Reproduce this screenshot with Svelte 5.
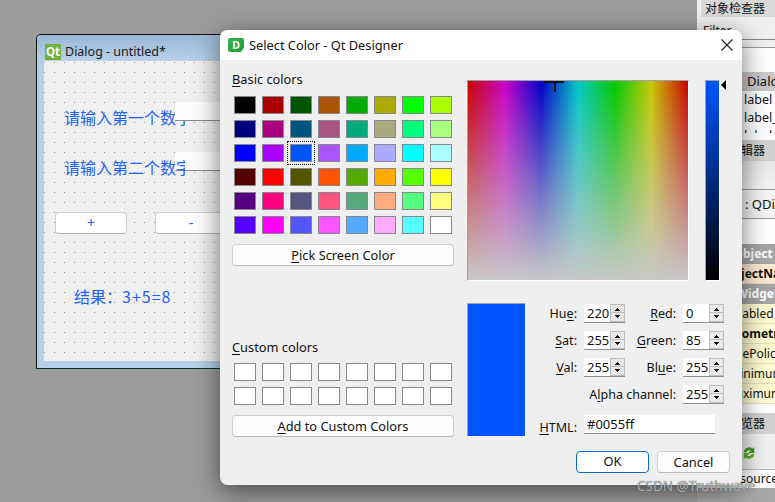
<script>
  const basic = [
    '#000000','#aa0000','#005500','#aa5500','#00aa00','#aaaa00','#00ff00','#aaff00',
    '#00007f','#aa007f','#00557f','#aa557f','#00aa7f','#aaaa7f','#00ff7f','#aaff7f',
    '#0000ff','#aa00ff','#0055ff','#aa55ff','#00aaff','#aaaaff','#00ffff','#aaffff',
    '#550000','#ff0000','#555500','#ff5500','#55aa00','#ffaa00','#55ff00','#ffff00',
    '#55007f','#ff007f','#55557f','#ff557f','#55aa7f','#ffaa7f','#55ff7f','#ffff7f',
    '#5500ff','#ff00ff','#5555ff','#ff55ff','#55aaff','#ffaaff','#55ffff','#ffffff'
  ];
  const custom = Array(16).fill('#ffffff');
  const props = [
    { t: 'QObject', c: 'head', p: 27 },
    { t: 'objectName', c: 'peach bold', p: 29 },
    { t: 'QWidget', c: 'head', p: 30 },
    { t: 'enabled', c: 'yellow', p: 31 },
    { t: 'geometry', c: 'yellow bold', p: 30 },
    { t: 'sizePolicy', c: 'yellow', p: 31 },
    { t: 'minimumSize', c: 'yellow', p: 32 },
    { t: 'maximumSize', c: 'yellow', p: 28 }
  ];
</script>

<div class="desk">
  <aside class="side">
    <div class="dock">对象检查器</div>
    <div class="filter">Filter</div>
    <div class="tree">
      <div class="treehead">Dialog</div>
      <div class="treerow">label</div>
      <div class="treerow">label_2</div>
      <div class="treerow cut">label_3</div>
    </div>
    <div class="dock sub">属性编辑器</div>
    <div class="strip"></div>
    <div class="classrow">: QDialog</div>
    <div class="blank"></div>
    {#each props as r}
      <div class="prop {r.c}" style:padding-left="{r.p}px">{r.t}</div>
    {/each}
    <div class="gap"></div>
    <div class="dock sub">资源浏览器</div>
    <div class="tool">
      <svg width="14" height="20" viewBox="0 0 16 20">
        <path d="M2 9a6 6 0 0 1 10-4l2-2v7H7l3-3a3.500 3.500 0 0 0-5 2z" fill="#3f9a1e"/>
        <path d="M14 11a6 6 0 0 1-10 4l-2 2v-7h7l-3 3a3.500 3.500 0 0 0 5-2z" fill="#5cb82c"/>
      </svg>
    </div>
    <div class="res">&lt;resource root&gt;</div>
    <div class="tail"></div>
  </aside>

  <section class="form-window">
    <header class="form-title">
      <span class="qt">Qt</span>
      <span class="ftext">Dialog - untitled*</span>
    </header>
    <div class="canvas">
      <div class="lbl l1">请输入第一个数字</div>
      <div class="edit e1"></div>
      <div class="edit e2"></div>
      <div class="lbl l2">请输入第二个数字</div>
      <div class="fbtn b1">+</div>
      <div class="fbtn b2">-</div>
      <div class="result">结果：<span class="sum">3+5=8</span></div>
    </div>
  </section>

  <section class="dialog">
    <header class="titlebar">
      <span class="dlogo">D</span>
      <span class="ttext">Select Color - Qt Designer</span>
      <svg class="close" width="12" height="12" viewBox="0 0 12 12"><path d="M.5.500l11 11M11.500.500l-11 11" stroke="#222" stroke-width="1.100" fill="none"/></svg>
    </header>
    <div class="body">
      <div class="left">
        <div class="cap"><u>B</u>asic colors</div>
        <div class="swatches first">
          {#each basic as c, i}
            <span class="sw" class:sel={i === 18} style:background={c}></span>
          {/each}
        </div>
        <div class="btn pick"><u>P</u>ick Screen Color</div>
        <div class="cap custom"><u>C</u>ustom colors</div>
        <div class="swatches second">
          {#each custom as c}
            <span class="sw" style:background={c}></span>
          {/each}
        </div>
        <div class="btn add"><u>A</u>dd to Custom Colors</div>
      </div>
      <div class="right">
        <div class="pickers">
          <div class="spectrum">
            <span class="ch-h"></span>
            <span class="ch-v"></span>
          </div>
          <div class="valuebar"><span class="arrow"></span></div>
        </div>
        <div class="lower">
          <div class="preview"></div>
          <div class="fields">
            <label for="x">Hu<u>e</u>:</label>
            <div class="spin"><span>220</span><i></i></div>
            <label for="x"><u>R</u>ed:</label>
            <div class="spin"><span>0</span><i></i></div>
            <label for="x"><u>S</u>at:</label>
            <div class="spin"><span>255</span><i></i></div>
            <label for="x"><u>G</u>reen:</label>
            <div class="spin"><span>85</span><i></i></div>
            <label for="x"><u>V</u>al:</label>
            <div class="spin"><span>255</span><i></i></div>
            <label for="x">Bl<u>u</u>e:</label>
            <div class="spin"><span>255</span><i></i></div>
            <label for="x" class="alpha">A<u>l</u>pha channel:</label>
            <div class="spin"><span>255</span><i></i></div>
            <label for="x" class="html"><u>H</u>TML:</label>
            <div class="htmlbox">#0055ff</div>
          </div>
        </div>
        <div class="footer">
          <div class="btn ok">OK</div>
          <div class="btn cancel">Cancel</div>
        </div>
      </div>
    </div>
  </section>

  <div class="mark">CSDN @Truthwave</div>
</div>

<style>
  :global(body) { margin: 0; }
  .desk {
    position: relative;
    width: 775px;
    height: 502px;
    overflow: hidden;
    background: #9c9c9c;
    font-family: "Noto Sans", "Noto Sans CJK SC", sans-serif;
    font-size: 12.800px;
    color: #111;
  }
  u { text-underline-offset: 2px; text-decoration-thickness: 1px; }

  /* right dock */
  .side {
    position: absolute;
    left: 697px;
    top: 0;
    width: 78px;
    height: 502px;
    background: #f0f0f0;
    display: flex;
    flex-direction: column;
    white-space: nowrap;
    overflow: hidden;
    font-size: 12px;
  }
  .dock {
    height: 17px;
    line-height: 17px;
    margin-left: 4px;
    padding-left: 4px;
    background: #d9d9d9;
    flex: none;
    font-size: 12px;
  }
  .filter { height: 23px; line-height: 27px; padding-left: 6px; flex: none; border-bottom: 1px solid #888; overflow: hidden; box-sizing: border-box; }
  .tree { height: 93px; flex: none; background: #fff; padding-top: 24px; box-sizing: border-box; border-top: 1px solid #999; margin-top: 7px; overflow: hidden; }
  .treehead { height: 19px; line-height: 19px; background: #c9c9c9; padding-left: 50px; font-size: 13px; }
  .treerow { height: 18px; line-height: 18px; padding-left: 47px; font-size: 12.500px; }
  .treerow.cut { height: 6px; overflow: hidden; }
  .sub { height: 21px; line-height: 21px; margin: 0; padding-left: 8px; background: #d2d2d2; }
  .strip { height: 28px; flex: none; background: linear-gradient(#e6e6e6, #f4f4f4); border-bottom: 1px solid #999; }
  .classrow { height: 28px; line-height: 28px; flex: none; padding-left: 48px; border-bottom: 1px solid #999; background: #f4f4f4; font-size: 13px; }
  .blank { height: 25px; flex: none; background: #fff; }
  .prop { height: 20px; line-height: 20px; flex: none; border-bottom: 1px solid #e4e0c0; box-sizing: border-box; }
  .head { background: #a6a6a6; color: #fff; font-weight: 700; border-bottom: 0; }
  .peach { background: #fde9d0; }
  .yellow { background: #fdfbd0; }
  .bold { font-weight: 700; }
  .gap { height: 9px; flex: none; background: #fff; }
  .tool { height: 36px; flex: none; padding: 9px 0 0 45px; box-sizing: border-box; background: #f0f0f0; border-bottom: 1px solid #bbb; }
  .res { height: 18px; flex: none; line-height: 18px; padding-left: 25px; background: #fff; }
  .tail { flex: 1; background: #a8a8a8; }

  /* form under design */
  .form-window {
    position: absolute;
    left: 36px;
    top: 34px;
    width: 300px;
    height: 333px;
    border: 1px solid #111;
    border-bottom-color: #0a2a2a;
    border-radius: 5px 5px 0 0;
    background: #b5cfe8;
    box-sizing: content-box;
  }
  .form-title {
    height: 26px;
    box-sizing: border-box;
    padding: 0 0 1px 8px;
    display: flex;
    align-items: flex-end;
    gap: 4px;
    background: linear-gradient(#9ab7d6, #b8d1ea);
    border-radius: 4px 4px 0 0;
    font-size: 12.500px;
    color: #1a1a1a;
  }
  .ftext { line-height: 16px; }
  .qt {
    width: 16px;
    height: 16px;
    background: #71b23c;
    color: #fff;
    font-weight: 700;
    font-size: 11.500px;
    line-height: 16px;
    text-align: center;
  }
  .canvas {
    position: absolute;
    left: 7px;
    top: 26px;
    right: 0;
    height: 300px;
    background-color: #f0f0f0;
    background-image: conic-gradient(at 1px 1px, transparent 75%, #8f8f8f 0);
    background-size: 10px 10px;
    background-position: 0 1px;
  }
  .lbl {
    position: absolute;
    left: 20px;
    width: 121px;
    height: 22px;
    line-height: 22px;
    overflow: hidden;
    white-space: nowrap;
    color: #1f62f5;
    font: 16px/22px "Noto Sans CJK SC", sans-serif;
  }
  .l1 { top: 45px; }
  .l2 { top: 95px; }
  .edit {
    position: absolute;
    left: 131px;
    width: 200px;
    height: 18px;
    background: #fdfdfd;
    border-bottom: 1px solid #8a8a8a;
  }
  .e1 { top: 41px; }
  .e2 { top: 91px; }
  .fbtn {
    position: absolute;
    top: 151px;
    width: 70px;
    height: 20px;
    background: #fff;
    border: 1px solid #cfcfcf;
    border-bottom-color: #b5b5b5;
    border-radius: 4px;
    text-align: center;
    color: #1f62f5;
    line-height: 20px;
    font-size: 14px;
  }
  .b1 { left: 11px; }
  .b2 { left: 111px; }
  .result {
    position: absolute;
    left: 30px;
    top: 224px;
    color: #1f62f5;
    font: 16px/22px "Noto Sans CJK SC", sans-serif;
  }
  .sum { letter-spacing: 1px; }

  /* color dialog */
  .dialog {
    position: absolute;
    left: 220px;
    top: 30px;
    width: 522px;
    height: 455px;
    border-radius: 8px;
    overflow: hidden;
    background: #efefef;
    display: flex;
    flex-direction: column;
    z-index: 3;
  }
  .desk::before {
    content: "";
    position: absolute;
    left: 220px;
    top: 30px;
    width: 522px;
    height: 455px;
    border-radius: 8px;
    box-shadow: 0 6px 26px rgba(0, 0, 0, 0.55);
    z-index: 2;
  }
  .mark { z-index: 4; }
  .side { z-index: 1; }
  .form-window { z-index: 1; }
  .titlebar {
    height: 30px;
    flex: none;
    background: #fff;
    display: flex;
    align-items: center;
    padding: 0 9px 0 8px;
  }
  .dlogo {
    width: 16px;
    height: 14px;
    border-radius: 2px;
    background: linear-gradient(135deg, #35b34a, #1f9a3a);
    color: #fff;
    font-size: 10.500px;
    font-weight: 700;
    line-height: 14px;
    text-align: center;
    clip-path: polygon(0 0, 100% 0, 100% 70%, 80% 100%, 0 100%);
  }
  .ttext { margin-left: 5px; font-size: 12.800px; flex: 1; }
  .body { flex: 1; display: flex; padding-left: 12px; }
  .left { width: 222px; display: flex; flex-direction: column; padding-top: 10px; }
  .cap { height: 18px; line-height: 18px; font-size: 12.800px; }
  .swatches {
    display: grid;
    grid-template-columns: repeat(8, 22px);
    grid-auto-rows: 18px;
    gap: 6px;
    margin-left: 2px;
  }
  .first { margin-top: 8px; }
  .second { margin-top: 7px; }
  .sw { border: 1px solid #87878f; box-sizing: border-box; display: block; }
  .sel { outline: 1px dotted #111; outline-offset: 2px; }
  .btn {
    background: #fdfdfd;
    border: 1px solid #cfcfcf;
    border-bottom-color: #b8b8b8;
    border-radius: 4px;
    box-sizing: border-box;
    height: 22px;
    line-height: 20px;
    text-align: center;
    font-size: 12.800px;
  }
  .pick { margin-top: 10px; }
  .custom { margin-top: 72px; }
  .add { margin-top: 10px; }
  .right { margin-left: 13px; width: 263px; padding-top: 20px; display: flex; flex-direction: column; }
  .pickers { display: flex; gap: 17px; height: 201px; }
  .spectrum {
    position: relative;
    width: 222px;
    box-sizing: border-box;
    border: 1px solid #fff;
    border-top-color: #a0a0a0;
    border-left-color: #a0a0a0;
    background:
      linear-gradient(rgba(200,200,200,0), #c8c8c8),
      linear-gradient(90deg, #c80000 0%, #c800c8 16.670%, #0000c8 33.330%, #00c8c8 50%, #00c800 66.670%, #c8c800 83.330%, #c80000 100%);
  }
  .ch-h { position: absolute; left: 76px; top: 0; width: 20px; height: 2px; background: #111; }
  .ch-v { position: absolute; left: 86px; top: 0; width: 2px; height: 11px; background: #111; }
  .valuebar {
    position: relative;
    width: 15px;
    margin-left: -1px;
    box-sizing: border-box;
    border: 1px solid #fff;
    border-top-color: #a0a0a0;
    border-left-color: #a0a0a0;
    background: linear-gradient(#0055ff, #000);
  }
  .arrow {
    position: absolute;
    left: 14px;
    top: -1px;
    border: 5px solid transparent;
    border-right-color: #000;
    border-left: 0;
    margin-left: 1px;
  }
  .lower { display: flex; margin-top: 22px; height: 134px; }
  .preview {
    width: 59px;
    box-sizing: border-box;
    background: #0055ff;
    border: 1px solid #fff;
    border-top-color: #a0a0a0;
    border-left-color: #a0a0a0;
  }
  .fields {
    display: grid;
    grid-template-columns: 51px 41px 44px 41px;
    column-gap: 7px;
    grid-template-rows: repeat(4, 19px) 19px;
    row-gap: 8px;
    margin-top: 1px;
    align-items: center;
  }
  label { text-align: right; font-size: 12.500px; white-space: nowrap; }
  .alpha { grid-column: 1 / 4; }
  .html { grid-column: 1; margin-top: 6px; align-self: stretch; line-height: 19px; }
  .spin {
    height: 19px;
    box-sizing: border-box;
    background: #fff;
    border-bottom: 1px solid #8e8e8e;
    display: flex;
    justify-content: space-between;
    font-size: 13px;
    line-height: 18px;
  }
  .spin span { padding-left: 3px; }
  .spin i {
    width: 15px;
    height: 18px;
    flex: none;
    box-sizing: border-box;
    border: 1px solid #bdbdbd;
    background-color: #e9e9e9;
    background-image:
      linear-gradient(#bdbdbd, #bdbdbd),
      conic-gradient(from 135deg at 50% 0, #111 25%, transparent 0),
      conic-gradient(from -45deg at 50% 100%, #111 25%, transparent 0);
    background-size: 100% 1px, 7px 3px, 7px 3px;
    background-position: 0 7px, 3px 3px, 3px 10px;
    background-repeat: no-repeat;
  }
  .htmlbox {
    grid-column: 2 / 5;
    width: 131px;
    height: 19px;
    margin-top: 6px;
    box-sizing: border-box;
    background: #fff;
    border-bottom: 1px solid #8e8e8e;
    padding-left: 3px;
    line-height: 18px;
    font-size: 13px;
  }
  .footer { display: flex; justify-content: flex-end; gap: 8px; margin-top: 14px; }
  .ok { width: 73px; border: 1.500px solid #0a6ccc; line-height: 19px; background: #fff; }
  .cancel { width: 73px; }

  .mark {
    position: absolute;
    left: 637px;
    top: 477px;
    color: rgba(190, 190, 190, 0.9);
    text-shadow: 0 0 1px rgba(60,60,60,0.9);
    font-size: 13.500px;
    line-height: 18px;
    white-space: nowrap;
  }
</style>
